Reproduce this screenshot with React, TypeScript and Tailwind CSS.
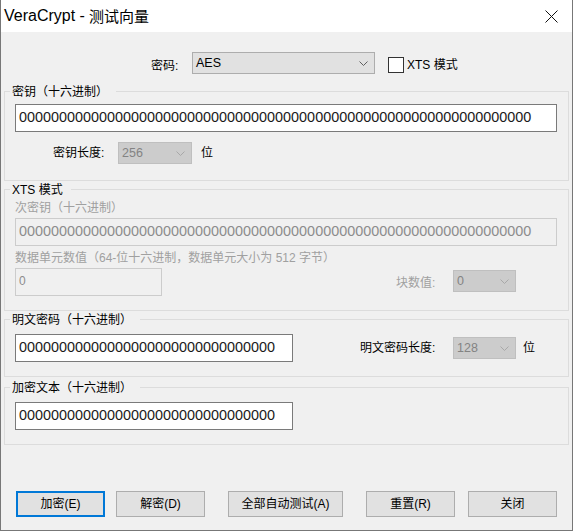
import React from "react";

function Chevron({ disabled }: { disabled?: boolean }) {
  return (
    <svg width="9" height="5" viewBox="0 0 9 5" className="shrink-0">
      <path
        d="M0.5 0.5 L4.5 4.5 L8.5 0.5"
        fill="none"
        stroke={disabled ? "#a8a8a8" : "#606060"}
        strokeWidth="1"
      />
    </svg>
  );
}

function Combo({
  value,
  disabled,
  className,
}: {
  value: string;
  disabled?: boolean;
  className: string;
}) {
  return (
    <div
      className={`flex h-[22px] shrink-0 items-center justify-between border pl-[3px] pr-[6px] text-[12.5px] leading-none ${
        disabled
          ? "border-[#bfbfbf] bg-[#cccccc] text-[#838383]"
          : "border-[#adadad] bg-[#e1e1e1] text-black"
      } ${className}`}
    >
      <span>{value}</span>
      <Chevron disabled={disabled} />
    </div>
  );
}

function Field({
  value,
  disabled,
  className,
  small,
}: {
  value: string;
  disabled?: boolean;
  className: string;
  small?: boolean;
}) {
  return (
    <div
      className={`flex h-[28px] shrink-0 items-center overflow-hidden border pb-[2px] pl-[3px] leading-none ${
        small ? "text-[12px]" : "text-[14.4px]"
      } ${
        disabled
          ? "border-[#cccccc] bg-[#f0f0f0] text-[#8c8c8c]"
          : "border-[#7a7a7a] bg-white text-[#1a1a1a]"
      } ${className}`}
    >
      {value}
    </div>
  );
}

function Group({
  title,
  className,
  children,
}: {
  title: string;
  className: string;
  children: React.ReactNode;
}) {
  return (
    <div
      className={`relative ml-[3px] w-[565px] shrink-0 border border-[#dcdcdc] pl-[10px] ${className}`}
    >
      <span className="absolute left-[5px] top-[-7px] bg-[#f0f0f0] pl-[2px] pr-[8px] text-[12px] leading-[14px] text-black">
        {title}
      </span>
      {children}
    </div>
  );
}

function Btn({
  label,
  className,
  focused,
}: {
  label: string;
  className: string;
  focused?: boolean;
}) {
  return (
    <button
      type="button"
      className={`flex h-[26px] shrink-0 items-center justify-center bg-[#e1e1e1] text-[12px] leading-none text-black ${
        focused ? "border-2 border-[#0078d7]" : "border border-[#adadad]"
      } ${className}`}
    >
      {label}
    </button>
  );
}

const Z64 = "0".repeat(64);
const Z32 = "0".repeat(32);

export default function App() {
  return (
    <div className="flex h-[531px] w-[573px] flex-col border-x border-b border-[#777777] bg-[#f0f0f0] text-black [font-family:'Liberation_Sans','Noto_Sans_CJK_SC',sans-serif]">
      {/* Title bar */}
      <div className="flex h-[32px] shrink-0 items-center justify-between bg-white pl-[3px] pr-[14px]">
        <div className="flex items-center leading-none text-black">
          <span className="text-[16px]">VeraCrypt - </span>
          <span className="ml-[4px] text-[15px]">测试向量</span>
        </div>
        <svg width="13" height="13" viewBox="0 0 13 13">
          <path d="M0.5 0.5 L12.5 12.5 M12.5 0.5 L0.5 12.5" stroke="#111" strokeWidth="1" />
        </svg>
      </div>

      {/* Body */}
      <div className="flex flex-1 flex-col pt-[20px]">
        {/* Cipher row */}
        <div className="flex h-[22px] items-start">
          <span className="ml-[150px] mt-[7px] w-[41px] text-[12px] leading-[14px]">密码:</span>
          <Combo value="AES" className="w-[183px]" />
          <div className="ml-[13px] mt-[5px] h-[16px] w-[16px] border border-[#333333] bg-white" />
          <span className="ml-[3px] mt-[6px] text-[12px] leading-[14px]">XTS 模式</span>
        </div>

        {/* Key group */}
        <Group title="密钥（十六进制）" className="mt-[17px] h-[90px] pt-[12px]">
          <Field value={Z64} className="w-[542px]" />
          <div className="mt-[10px] flex items-center">
            <span className="ml-[38px] w-[65px] text-[12px] leading-[14px]">密钥长度:</span>
            <Combo value="256" disabled className="w-[74px]" />
            <span className="ml-[9px] text-[12px] leading-[14px]">位</span>
          </div>
        </Group>

        {/* XTS group */}
        <Group title="XTS 模式" className="mt-[8px] h-[122px] pt-[11px]">
          <div className="text-[12px] leading-[14px] text-[#a0a0a0]">次密钥（十六进制）</div>
          <Field value={Z64} disabled className="mt-[3px] w-[542px]" />
          <div className="mt-[5px] text-[12px] leading-[14px] text-[#a0a0a0]">
            数据单元数值（64-位十六进制，数据单元大小为 512 字节）
          </div>
          <div className="mt-[3px] flex items-start">
            <Field value="0" disabled small className="w-[147px]" />
            <span className="ml-[234px] mt-[8px] w-[57px] text-[12px] leading-[14px] text-[#a0a0a0]">
              块数值:
            </span>
            <Combo value="0" disabled className="mt-[2px] w-[63px]" />
          </div>
        </Group>

        {/* Plaintext group */}
        <Group title="明文密码（十六进制）" className="mt-[8px] h-[58px] pt-[14px]">
          <div className="flex items-center">
            <Field value={Z32} className="w-[278px]" />
            <span className="ml-[67px] w-[93px] text-[12px] leading-[14px]">明文密码长度:</span>
            <Combo value="128" disabled className="w-[63px]" />
            <span className="ml-[7px] text-[12px] leading-[14px]">位</span>
          </div>
        </Group>

        {/* Ciphertext group */}
        <Group title="加密文本（十六进制）" className="mt-[10px] h-[58px] pt-[14px]">
          <Field value={Z32} className="w-[278px]" />
        </Group>

        {/* Buttons */}
        <div className="mt-[46px] flex">
          <Btn label="加密(E)" focused className="ml-[15px] w-[89px]" />
          <Btn label="解密(D)" className="ml-[11px] w-[89px]" />
          <Btn label="全部自动测试(A)" className="ml-[23px] w-[115px]" />
          <Btn label="重置(R)" className="ml-[23px] w-[89px]" />
          <Btn label="关闭" className="ml-[13px] w-[89px]" />
        </div>
      </div>
    </div>
  );
}
